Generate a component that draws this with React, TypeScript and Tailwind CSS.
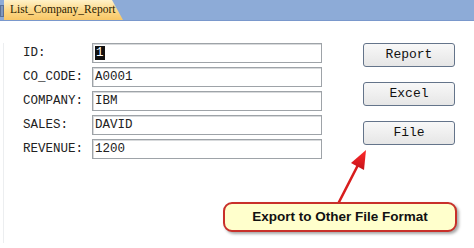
import React from "react";

const mono = { fontFamily: '"Liberation Mono", "DejaVu Sans Mono", monospace' };

function Field({ label, value, selected }: { label: string; value: string; selected?: boolean }) {
  return (
    <div className="flex items-center h-[20px]">
      <div className="w-[69px] text-[12.5px] text-[#222]" style={mono}>{label}</div>
      <div className="w-[230px] h-[20px] border border-[#9ea3a8] bg-white flex items-center pl-[2px] shadow-[inset_1px_1px_0_#d8dadc]">
        {selected ? (
          <span className="bg-[#111] text-white text-[12.5px] leading-[14px] px-[1px]" style={mono}>{value}</span>
        ) : (
          <span className="text-[12.5px] text-[#222]" style={mono}>{value}</span>
        )}
      </div>
    </div>
  );
}

function Btn({ label }: { label: string }) {
  return (
    <div className="w-[92px] h-[24px] rounded-[3px] border border-[#64748a] bg-gradient-to-b from-[#f8f8f8] to-[#e6e6e6] flex items-center justify-center text-[13px] text-[#111]" style={mono}>
      {label}
    </div>
  );
}

export default function App() {
  return (
    <div className="relative w-[474px] h-[248px] bg-white overflow-hidden">
      <div className="h-[21px] bg-[#8dabd7] border-b border-[#7a98cc] flex">
        <div className="w-[4px] h-[12px] bg-[#7f97bd] mt-[5px] border border-[#5b7197]" />
        <div className="w-[119px] h-[20px] bg-gradient-to-b from-[#fff2c8] via-[#fcd98a] to-[#f8c766] [clip-path:polygon(0_0,108px_0,119px_100%,0_100%)] flex items-center pl-[6px] text-[11.5px] text-[#2a1a00]" style={{ fontFamily: '"Liberation Serif", "DejaVu Serif", serif' }}>
          List_Company_Report
        </div>
      </div>
      <div className="flex pt-[22px]">
        <div className="w-[3px] ml-[3px] h-[200px] border-l border-[#eceef0]" />
        <div className="flex flex-col gap-[4px] pl-[17px]">
          <Field label="ID:" value="1" selected />
          <Field label="CO_CODE:" value="A0001" />
          <Field label="COMPANY:" value="IBM" />
          <Field label="SALES:" value="DAVID" />
          <Field label="REVENUE:" value="1200" />
        </div>
        <div className="flex flex-col gap-[15px] pl-[41px]">
          <Btn label="Report" />
          <Btn label="Excel" />
          <Btn label="File" />
        </div>
      </div>

      <svg className="absolute left-0 top-0" width="474" height="248" viewBox="0 0 474 248">
        <defs>
          <linearGradient id="ar" x1="0" y1="1" x2="0" y2="0">
            <stop offset="0" stopColor="#c4121a" />
            <stop offset="1" stopColor="#ff2a2a" />
          </linearGradient>
        </defs>
        <line x1="338" y1="204" x2="358" y2="165" stroke="#d81d1d" strokeWidth="2.6" strokeLinecap="round" />
        <polygon points="366,150 364,170 351,163" fill="url(#ar)" />
      </svg>

      <div className="absolute left-[223px] top-[202px] w-[234px] h-[30px] rounded-[9px] border-2 border-[#c8302a] bg-[#ffffcc] shadow-[2px_2px_3px_rgba(0,0,0,0.35)] flex items-center justify-center text-[13.5px] font-bold text-[#111]" style={{ fontFamily: '"Liberation Sans", Arial, sans-serif' }}>
        Export to Other File Format
      </div>
    </div>
  );
}
